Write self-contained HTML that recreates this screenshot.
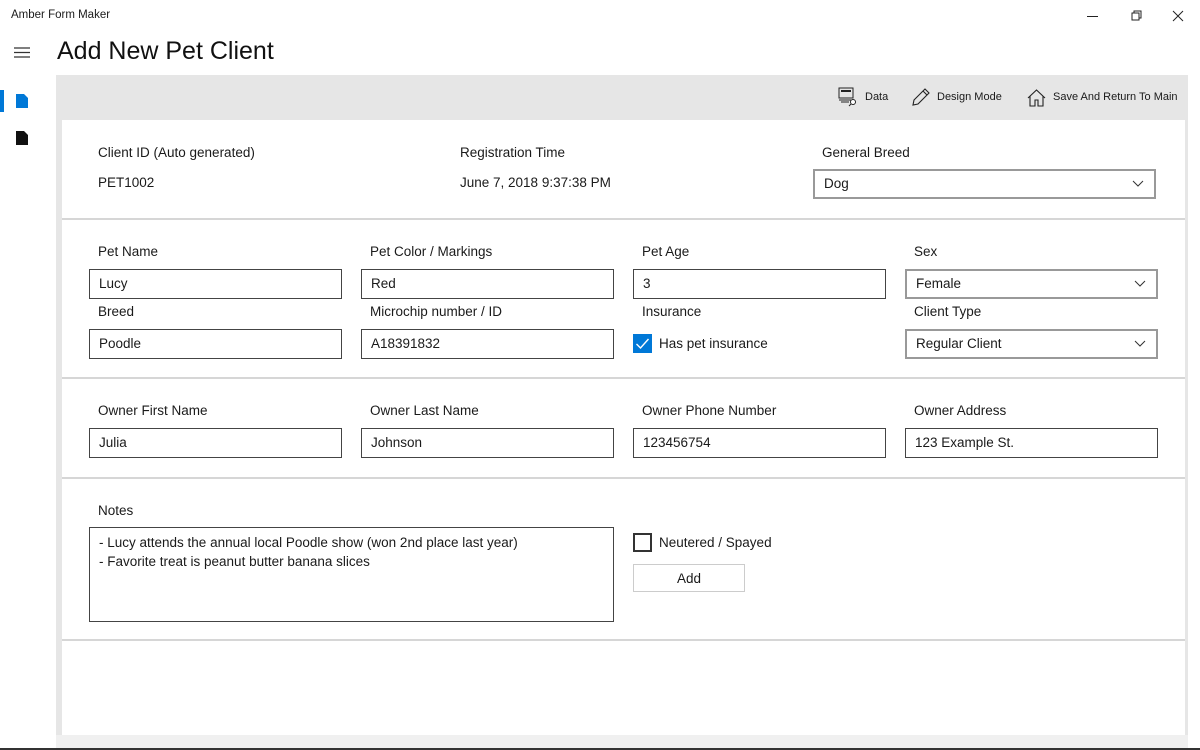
<!DOCTYPE html>
<html><head><meta charset="utf-8"><style>
*{margin:0;padding:0;box-sizing:border-box}
body{width:1200px;height:750px;background:#fff;font-family:"Liberation Sans","DejaVu Sans",sans-serif;color:#1a1a1a;position:relative;overflow:hidden;font-size:13.5px}
.a{position:absolute;white-space:nowrap}
.in{position:absolute;border:1px solid #444;height:30px;padding:0 0 0 9px;line-height:28px;background:#fff;font-size:13.5px}
.dd{border:2px solid #999;line-height:26px;padding-left:9px}
.hr{position:absolute;left:62px;width:1123px;height:2px;background:#d6d6d6}
.chev{position:absolute;right:10px;top:9px}
</style></head><body>
<div class="a" style="left:11px;top:9px;font-size:11.5px">Amber Form Maker</div>
<svg class="a" style="left:1087px;top:10px" width="100" height="14"><line x1="0" y1="6.5" x2="11" y2="6.5" stroke="#222"/><rect x="45" y="3" width="7" height="7" fill="none" stroke="#222"/><path d="M47 3V1h7v7h-2" fill="none" stroke="#222"/><path d="M86 1l10 10M96 1L86 11" stroke="#222"/></svg>
<svg class="a" style="left:14px;top:47px" width="17" height="12"><path d="M0 1h16M0 5.5h16M0 10h16" stroke="#333" stroke-width="1.3"/></svg>
<div class="a" style="left:57px;top:37px;font-size:25px;color:#111">Add New Pet Client</div>
<div class="a" style="left:0;top:90px;width:4px;height:22px;background:#0078d7"></div>
<svg class="a" style="left:16px;top:94px" width="12" height="14"><path d="M0 0h8l4 4v10H0z" fill="#0078d7"/></svg>
<svg class="a" style="left:16px;top:131px" width="12" height="14"><path d="M0 0h8l4 4v10H0z" fill="#111"/></svg>
<div class="a" style="left:56px;top:75px;width:1132px;height:660px;background:#e6e6e6"></div>
<div class="a" style="left:56px;top:735px;width:1132px;height:13px;background:#f0f0f0"></div>
<div class="a" style="left:0;top:748px;width:1200px;height:2px;background:#333"></div>
<div class="a" style="left:62px;top:120px;width:1123px;height:615px;background:#fff"></div>
<svg class="a" style="left:838px;top:87px" width="20" height="20"><rect x="1" y="1" width="14" height="10" fill="none" stroke="#222"/><rect x="3" y="3" width="10" height="2" fill="#222"/><path d="M1 13h12M3 15h8" stroke="#222"/><circle cx="15" cy="15" r="2.5" fill="#fff" stroke="#222"/><path d="M13 17l-2 2" stroke="#222"/></svg>
<div class="a" style="left:865px;top:91px;font-size:11px">Data</div>
<svg class="a" style="left:911px;top:87px" width="20" height="20"><path d="M2 18l1-5L14 2l4 4L7 17z M12 4l4 4" fill="none" stroke="#222" stroke-width="1.1"/></svg>
<div class="a" style="left:937px;top:91px;font-size:11px">Design Mode</div>
<svg class="a" style="left:1027px;top:88px" width="20" height="20"><path d="M1 10L9.5 2 18 10M3 8v10h5v-6h3v6h5V8" fill="none" stroke="#222" stroke-width="1.1"/></svg>
<div class="a" style="left:1053px;top:91px;font-size:11px">Save And Return To Main</div>

<div class="a" style="left:98px;top:145px">Client ID (Auto generated)</div>
<div class="a" style="left:98px;top:175px">PET1002</div>
<div class="a" style="left:460px;top:145px">Registration Time</div>
<div class="a" style="left:460px;top:175px">June 7, 2018 9:37:38 PM</div>
<div class="a" style="left:822px;top:145px">General Breed</div>
<div class="in dd" style="left:813px;top:169px;width:343px">Dog<svg class="chev" width="12" height="8"><path d="M1 1l5 5 5-5" fill="none" stroke="#333"/></svg></div>
<div class="hr" style="top:218px"></div>

<div class="a" style="left:98px;top:244px">Pet Name</div>
<div class="a" style="left:370px;top:244px">Pet Color / Markings</div>
<div class="a" style="left:642px;top:244px">Pet Age</div>
<div class="a" style="left:914px;top:244px">Sex</div>
<div class="in" style="left:89px;top:269px;width:253px">Lucy</div>
<div class="in" style="left:361px;top:269px;width:253px">Red</div>
<div class="in" style="left:633px;top:269px;width:253px">3</div>
<div class="in dd" style="left:905px;top:269px;width:253px">Female<svg class="chev" width="12" height="8"><path d="M1 1l5 5 5-5" fill="none" stroke="#333"/></svg></div>
<div class="a" style="left:98px;top:304px">Breed</div>
<div class="a" style="left:370px;top:304px">Microchip number / ID</div>
<div class="a" style="left:642px;top:304px">Insurance</div>
<div class="a" style="left:914px;top:304px">Client Type</div>
<div class="in" style="left:89px;top:329px;width:253px">Poodle</div>
<div class="in" style="left:361px;top:329px;width:253px">A18391832</div>
<svg class="a" style="left:633px;top:334px" width="19" height="19"><rect width="19" height="19" fill="#0078d7"/><path d="M3.5 10l4 4 8-9" fill="none" stroke="#fff" stroke-width="1.4"/></svg>
<div class="a" style="left:659px;top:336px">Has pet insurance</div>
<div class="in dd" style="left:905px;top:329px;width:253px">Regular Client<svg class="chev" width="12" height="8"><path d="M1 1l5 5 5-5" fill="none" stroke="#333"/></svg></div>
<div class="hr" style="top:377px"></div>

<div class="a" style="left:98px;top:403px">Owner First Name</div>
<div class="a" style="left:370px;top:403px">Owner Last Name</div>
<div class="a" style="left:642px;top:403px">Owner Phone Number</div>
<div class="a" style="left:914px;top:403px">Owner Address</div>
<div class="in" style="left:89px;top:428px;width:253px">Julia</div>
<div class="in" style="left:361px;top:428px;width:253px">Johnson</div>
<div class="in" style="left:633px;top:428px;width:253px">123456754</div>
<div class="in" style="left:905px;top:428px;width:253px">123 Example St.</div>
<div class="hr" style="top:477px"></div>

<div class="a" style="left:98px;top:503px">Notes</div>
<div class="in" style="left:89px;top:527px;width:525px;height:95px;line-height:19px;padding-top:5px;white-space:pre">- Lucy attends the annual local Poodle show (won 2nd place last year)
- Favorite treat is peanut butter banana slices</div>
<div class="a" style="left:633px;top:533px;width:19px;height:19px;border:2px solid #333"></div>
<div class="a" style="left:659px;top:535px">Neutered / Spayed</div>
<div class="a" style="left:633px;top:564px;width:112px;height:28px;border:1px solid #ccc;text-align:center;line-height:27px">Add</div>
<div class="hr" style="top:639px"></div>
</body></html>
